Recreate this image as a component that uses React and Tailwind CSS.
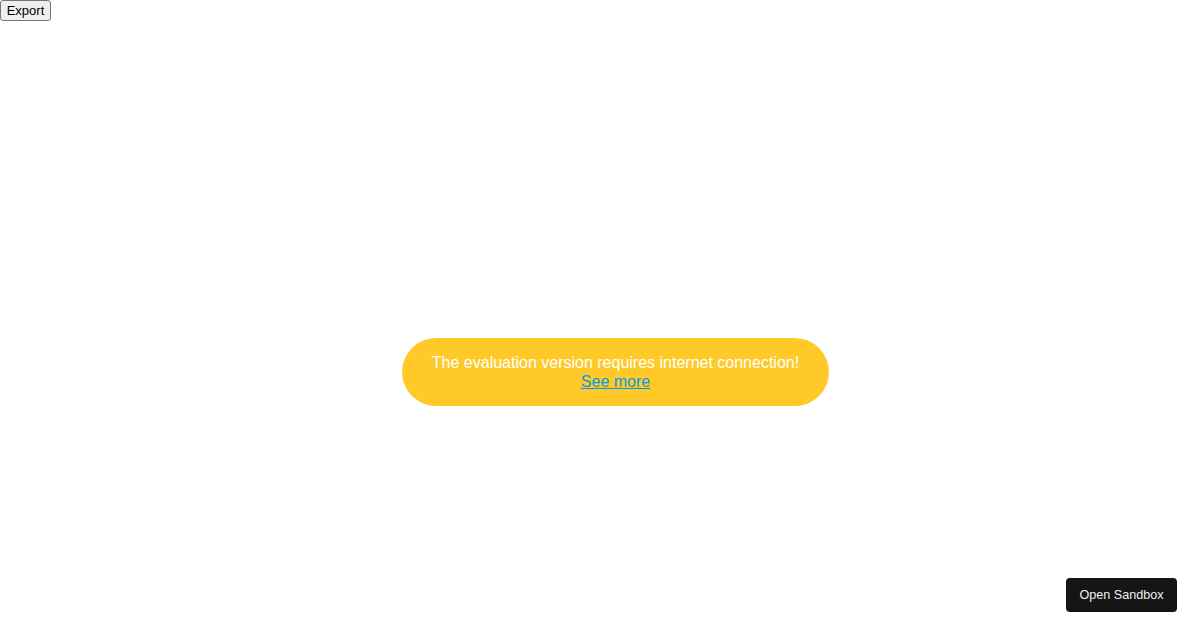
export default function App() {
  return (
    <div className="relative h-[630px] w-[1200px] overflow-hidden bg-white font-['Liberation_Sans',Arial,sans-serif]">
      <div className="flex">
        <button className="h-[21px] w-[51px] rounded-[3px] border border-[#767676] bg-[#efefef] text-[13px] leading-[19px] text-black">
          Export
        </button>
      </div>

      <div className="ml-[402px] mt-[317px] flex h-[68px] w-[427px] flex-col items-center justify-center rounded-[34px] bg-[#ffca28] text-center text-[16px] leading-[19px] text-white">
        <span>The evaluation version requires internet connection!</span>
        <a href="#" className="text-[#039be5] underline">
          See more
        </a>
      </div>

      {/* sandbox overlay button */}
      <button className="absolute left-[1066px] top-[578px] h-[34px] w-[111px] rounded-[4px] bg-[#151515] text-[12.6px] text-[#f0f0f0]">
        Open Sandbox
      </button>
    </div>
  );
}
